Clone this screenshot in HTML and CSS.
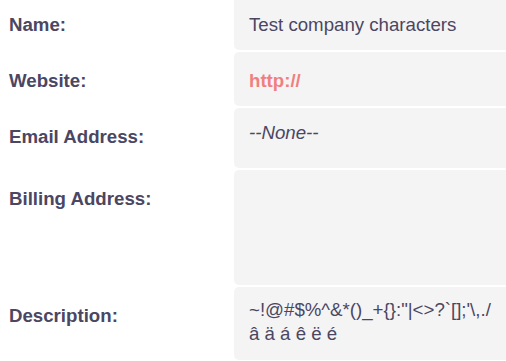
FILE: index.html
```html
<!DOCTYPE html>
<html lang="en">
<head>
    <meta charset="UTF-8">
    <meta name="viewport" content="width=device-width, initial-scale=1.0">
    <title>Company Details</title>
    <link rel="stylesheet" href="styles.css">
</head>
<body>
    <div class="details">
        <div class="detail-row">
            <div class="detail-label">Name:</div>
            <div class="detail-value">Test company characters</div>
        </div>

        <div class="detail-row">
            <div class="detail-label">Website:</div>
            <div class="detail-value"><a class="detail-link" href="#">http://</a></div>
        </div>

        <div class="detail-row">
            <div class="detail-label">Email Address:</div>
            <div class="detail-value detail-none"><em>--None--</em></div>
        </div>

        <div class="detail-row">
            <div class="detail-label">Billing Address:</div>
            <div class="detail-value detail-address"></div>
        </div>

        <div class="detail-row">
            <div class="detail-label">Description:</div>
            <div class="detail-value detail-multi">~!@#$%^&amp;*()_+{}:"|&lt;&gt;?`[];'\,./<br>â ä á ê ë é</div>
        </div>
    </div>
</body>
</html>
```

FILE: styles.css
```css
* {
    margin: 0;
    padding: 0;
    box-sizing: border-box;
    font-family: 'Liberation Sans', Arial, sans-serif;
}

:root {
    --text: #4b4662;
    --cell-bg: #f4f4f4;
    --link: #f08080;
}

body {
    background: #fff;
    color: var(--text);
    font-size: 14pt;
}

.details {
    margin-top: -4px;
}

.detail-row {
    display: grid;
    grid-template-columns: 234px 1fr;
    margin-bottom: 2px;
}

.detail-label {
    font-weight: bold;
    padding: 18px 9px 0;
}

/* cells run off the right side of the frame, so only the left corners are rounded */
.detail-value {
    background: var(--cell-bg);
    border-radius: 5px 0 0 5px;
    padding: 18px 15px 14px;
    min-height: 54px;
}

.detail-link {
    color: var(--link);
    font-weight: bold;
    text-decoration: none;
}

.detail-none {
    padding-top: 14px;
    min-height: 60px;
}

.detail-address {
    min-height: 115px;
}

.detail-multi {
    line-height: 24px;
    padding-top: 11px;
    min-height: 72px;
}
```
